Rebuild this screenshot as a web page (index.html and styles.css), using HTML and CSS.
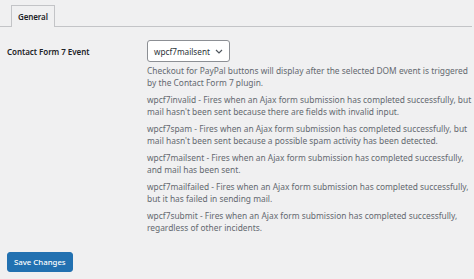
FILE: index.html
```html
<!DOCTYPE html>
<html>
<head>
<meta charset="utf-8">
<link rel="stylesheet" href="styles.css">
</head>
<body>
<div class="page">
  <nav class="tabs">
    <span class="tab">General</span>
  </nav>
  <div class="row">
    <div class="label">Contact Form 7 Event</div>
    <div class="field">
      <div class="select">
        <span>wpcf7mailsent</span>
        <svg width="8" height="5" viewBox="0 0 8 5"><path d="M1 1l3 3 3-3" fill="none" stroke="#50575e" stroke-width="1.2"/></svg>
      </div>
      <p class="desc">Checkout for PayPal buttons will display after the selected DOM event is triggered<br>by the Contact Form 7 plugin.</p>
      <p class="desc">wpcf7invalid - Fires when an Ajax form submission has completed successfully, but<br>mail hasn't been sent because there are fields with invalid input.</p>
      <p class="desc">wpcf7spam - Fires when an Ajax form submission has completed successfully, but<br>mail hasn't been sent because a possible spam activity has been detected.</p>
      <p class="desc">wpcf7mailsent - Fires when an Ajax form submission has completed successfully,<br>and mail has been sent.</p>
      <p class="desc">wpcf7mailfailed - Fires when an Ajax form submission has completed successfully,<br>but it has failed in sending mail.</p>
      <p class="desc">wpcf7submit - Fires when an Ajax form submission has completed successfully,<br>regardless of other incidents.</p>
    </div>
  </div>
  <div class="actions">
    <button class="btn">Save Changes</button>
  </div>
</div>
</body>
</html>
```

FILE: styles.css
```css
html, body {
  margin: 0;
  padding: 0;
  background: #f0f0f1;
}
.page {
  font-family: "Noto Sans", "Open Sans", sans-serif;
  color: #1d2327;
  font-size: 8.4px;
  width: 474px;
  height: 279px;
  overflow: hidden;
}
.tabs {
  display: flex;
  padding: 5px 0 0 11px;
  border-bottom: 1px solid #c3c4c7;
  margin-right: 2px;
}
.tab {
  display: block;
  border: 1px solid #c3c4c7;
  border-bottom: none;
  padding: 0 6px;
  height: 21px;
  line-height: 21px;
  font-weight: 600;
  font-size: 8px;
  letter-spacing: -0.1px;
  margin-bottom: -1px;
  background: #f0f0f1;
}
.row {
  display: flex;
  margin-top: 13px;
}
.label {
  width: 140px;
  padding-left: 7px;
  font-weight: 600;
  font-size: 8px;
  letter-spacing: -0.05px;
  padding-top: 6px;
  line-height: 12px;
}
.field {
  flex: 1;
}
.select {
  display: inline-flex;
  align-items: center;
  justify-content: space-between;
  box-sizing: border-box;
  width: 83px;
  height: 22px;
  padding: 0 6px 0 6px;
  background: #fff;
  border: 1px solid #8c8f94;
  border-radius: 3px;
  color: #2c3338;
  font-size: 8.2px;
  margin-bottom: 2.5px;
}
.desc {
  margin: 0 0 4.5px;
  color: #646970;
  line-height: 12.3px;
  white-space: nowrap;
}
.actions {
  padding: 13px 0 0 7px;
}
.btn {
  font-family: inherit;
  font-size: 7.8px;
  font-weight: 500;
  color: #fff;
  background: #2271b1;
  border: 1px solid #2271b1;
  border-radius: 3px;
  height: 20px;
  padding: 0 6px;
}
```
